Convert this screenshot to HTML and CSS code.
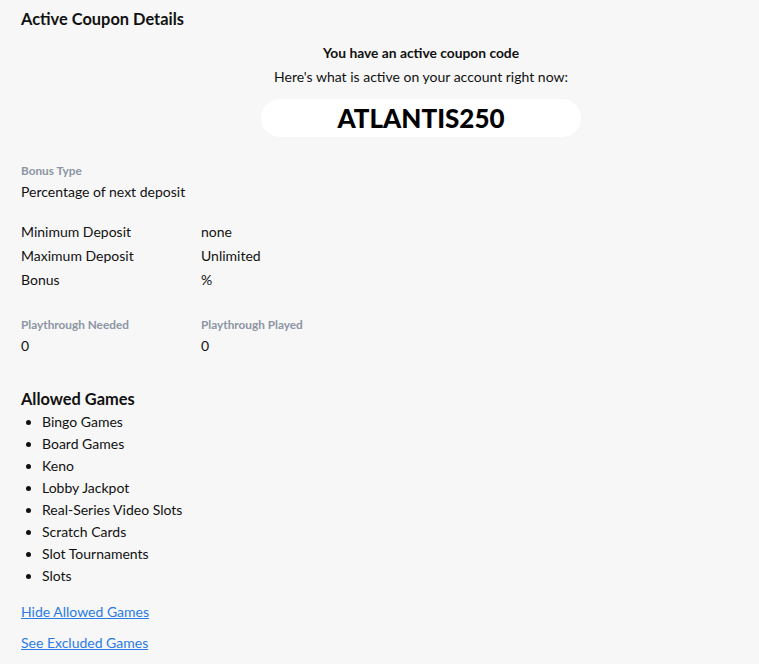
FILE: index.html
```html
<!DOCTYPE html>
<html>
<head>
<meta charset="utf-8">
<link rel="stylesheet" href="styles.css">
</head>
<body>
<div class="page">
  <h2 class="title">Active Coupon Details</h2>
  <div class="active">
    <div class="active-head">You have an active coupon code</div>
    <div class="active-sub">Here's what is active on your account right now:</div>
    <div class="code">ATLANTIS250</div>
  </div>
  <div class="field">
    <div class="label">Bonus Type</div>
    <div class="value">Percentage of next deposit</div>
  </div>
  <div class="grid">
    <div>Minimum Deposit</div><div>none</div>
    <div>Maximum Deposit</div><div>Unlimited</div>
    <div>Bonus</div><div>%</div>
  </div>
  <div class="grid play">
    <div class="label">Playthrough Needed</div><div class="label">Playthrough Played</div>
    <div class="value">0</div><div class="value">0</div>
  </div>
  <h3 class="games-title">Allowed Games</h3>
  <ul class="games">
    <li>Bingo Games</li>
    <li>Board Games</li>
    <li>Keno</li>
    <li>Lobby Jackpot</li>
    <li>Real-Series Video Slots</li>
    <li>Scratch Cards</li>
    <li>Slot Tournaments</li>
    <li>Slots</li>
  </ul>
  <div class="links">
    <a href="#" class="link">Hide Allowed Games</a>
    <a href="#" class="link">See Excluded Games</a>
  </div>
</div>
</body>
</html>
```
FILE: styles.css
```css
html, body {
  margin: 0;
  padding: 0;
  background: #f7f7f7;
}
body {
  font-family: Lato, "Liberation Sans", sans-serif;
  font-size: 14px;
  color: #111;
}
.page {
  padding: 9px 21px 10px 21px;
}
.title {
  margin: 0;
  font-size: 16.4px;
  font-weight: 700;
  line-height: 20px;
}
.active {
  padding-left: 83px;
  text-align: center;
  margin-top: 15px;
  display: flex;
  flex-direction: column;
  align-items: center;
}
.active-head {
  font-size: 13.8px;
  font-weight: 700;
  line-height: 18px;
}
.active-sub {
  font-size: 14px;
  line-height: 18px;
  margin-top: 6px;
}
.code {
  margin-top: 13px;
  width: 320px;
  height: 38px;
  line-height: 38px;
  border-radius: 19px;
  background: #fff;
  font-size: 26px;
  font-weight: 900;
  color: #000;
}
.field {
  margin-top: 27px;
}
.label {
  font-size: 11.8px;
  font-weight: 700;
  color: #8c95a3;
  line-height: 14px;
}
.value {
  line-height: 18px;
  margin-top: 5px;
}
.grid {
  display: grid;
  grid-template-columns: 180px 1fr;
  line-height: 24px;
  margin-top: 19px;
}
.grid.play {
  margin-top: 26px;
  line-height: normal;
}
.grid.play .value {
  margin-top: 5px;
}
.games-title {
  margin: 33px 0 1px 0;
  font-size: 16.4px;
  font-weight: 700;
  line-height: 22px;
}
.games {
  margin: 0;
  padding-left: 21px;
  line-height: 22px;
}
.links {
  margin-top: 15px;
  display: flex;
  flex-direction: column;
  align-items: flex-start;
  gap: 11px;
}
.link {
  color: #2a7be4;
  text-decoration: underline;
  line-height: 20px;
}
```
